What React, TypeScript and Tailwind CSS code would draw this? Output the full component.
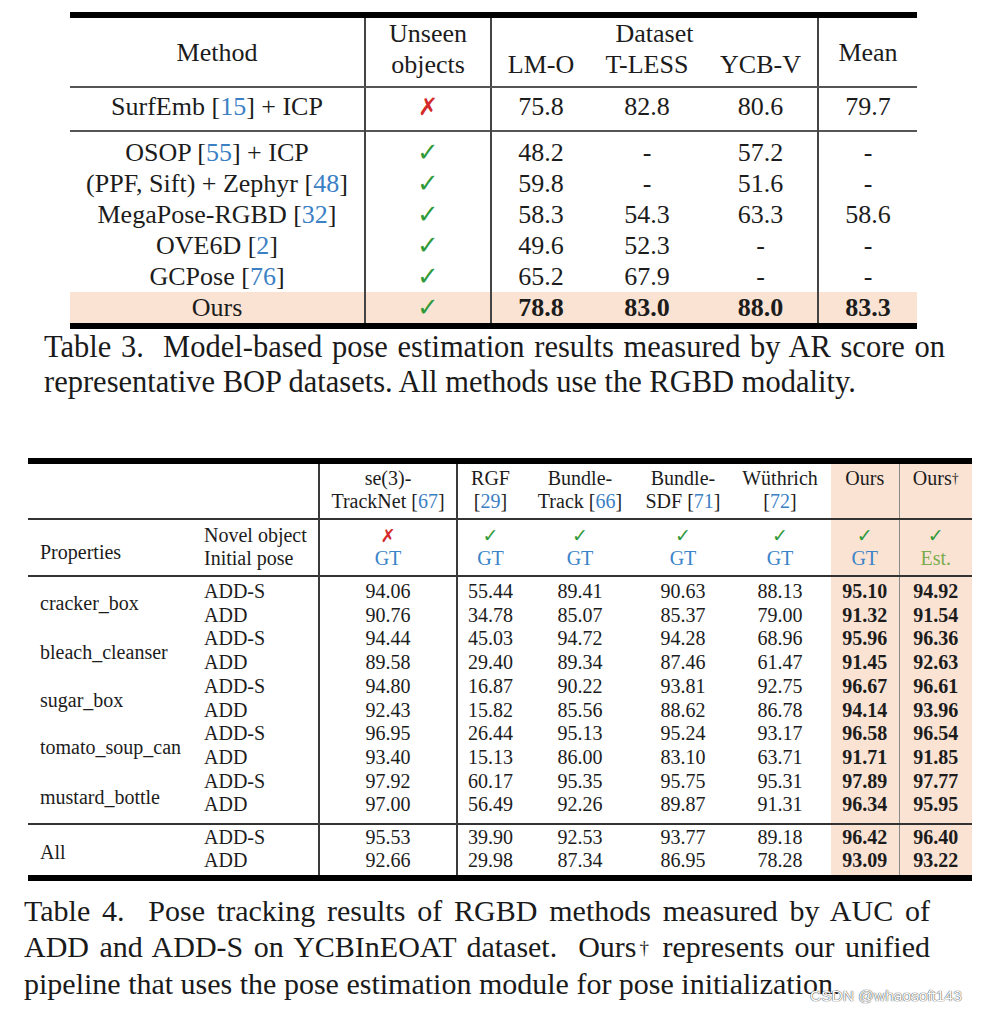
import React from "react";

const Cite = ({ n }: { n: string }) => (
  <>
    [<span className="text-[#3b80c4]">{n}</span>]
  </>
);

const Check = ({ big }: { big?: boolean }) => (
  <span
    className={
      big
        ? "font-['DejaVu_Sans',sans-serif] text-[26px] leading-none text-[#2f9a3a]"
        : "font-['DejaVu_Sans',sans-serif] text-[19px] leading-none text-[#2f9a3a]"
    }
  >
    ✓
  </span>
);

const Cross = ({ big }: { big?: boolean }) => (
  <span
    className={
      big
        ? "font-['DejaVu_Sans',sans-serif] text-[24px] leading-none text-[#d42a2a]"
        : "font-['DejaVu_Sans',sans-serif] text-[18px] leading-none text-[#d42a2a]"
    }
  >
    ✗
  </span>
);

const topRows = [
  { m: <>OSOP <Cite n="55" /> + ICP</>, v: ["48.2", "-", "57.2", "-"] },
  { m: <>(PPF, Sift) + Zephyr <Cite n="48" /></>, v: ["59.8", "-", "51.6", "-"] },
  { m: <>MegaPose-RGBD <Cite n="32" /></>, v: ["58.3", "54.3", "63.3", "58.6"] },
  { m: <>OVE6D <Cite n="2" /></>, v: ["49.6", "52.3", "-", "-"] },
  { m: <>GCPose <Cite n="76" /></>, v: ["65.2", "67.9", "-", "-"] },
];

const objects: [string, string[], string[]][] = [
  ["cracker_box", ["94.06", "55.44", "89.41", "90.63", "88.13", "95.10", "94.92"], ["90.76", "34.78", "85.07", "85.37", "79.00", "91.32", "91.54"]],
  ["bleach_cleanser", ["94.44", "45.03", "94.72", "94.28", "68.96", "95.96", "96.36"], ["89.58", "29.40", "89.34", "87.46", "61.47", "91.45", "92.63"]],
  ["sugar_box", ["94.80", "16.87", "90.22", "93.81", "92.75", "96.67", "96.61"], ["92.43", "15.82", "85.56", "88.62", "86.78", "94.14", "93.96"]],
  ["tomato_soup_can", ["96.95", "26.44", "95.13", "95.24", "93.17", "96.58", "96.54"], ["93.40", "15.13", "86.00", "83.10", "63.71", "91.71", "91.85"]],
  ["mustard_bottle", ["97.92", "60.17", "95.35", "95.75", "95.31", "97.89", "97.77"], ["97.00", "56.49", "92.26", "89.87", "91.31", "96.34", "95.95"]],
];

const allRow: [string[], string[]] = [
  ["95.53", "39.90", "92.53", "93.77", "89.18", "96.42", "96.40"],
  ["92.66", "29.98", "87.34", "86.95", "78.28", "93.09", "93.22"],
];

// per-column styling for the numeric cells of table 4
const vcls = (i: number) =>
  i === 0
    ? "border-r-2 border-r-[#3a3a3a]"
    : i === 5
    ? "bg-[#fbe3d4] font-bold"
    : i === 6
    ? "bg-[#fbe3d4] font-bold border-l border-l-[#8a8a8a]"
    : "";

const App: React.FC = () => {
  return (
    <div className="relative w-[984px] h-[1012px] overflow-hidden bg-white text-[#1c1c1c] font-['Liberation_Serif','Times_New_Roman',serif]">
      {/* Table 3 */}
      <div className="ml-[70px] mt-[12px] w-[847px]">
        <div className="h-[6px] bg-black" />
        <table className="w-[847px] table-fixed border-collapse text-[26px] text-center">
          <colgroup>
            <col className="w-[295px]" />
            <col className="w-[126px]" />
            <col className="w-[99px]" />
            <col className="w-[114px]" />
            <col className="w-[114px]" />
            <col className="w-[99px]" />
          </colgroup>
          <thead>
            <tr className="h-[31px]">
              <th rowSpan={2} className="font-normal align-middle border-r-2 border-r-[#444] border-b-2 border-b-[#555]">
                Method
              </th>
              <th rowSpan={2} className="font-normal align-top leading-[31px] border-r-2 border-r-[#444] border-b-2 border-b-[#555]">
                Unseen
                <br />
                objects
              </th>
              <th colSpan={3} className="font-normal leading-[31px] border-r-2 border-r-[#444]">
                Dataset
              </th>
              <th rowSpan={2} className="font-normal align-middle border-b-2 border-b-[#555]">
                Mean
              </th>
            </tr>
            <tr className="h-[38px]">
              <th className="font-normal align-top leading-[31px] border-b-2 border-b-[#555]">LM-O</th>
              <th className="font-normal align-top leading-[31px] border-b-2 border-b-[#555]">T-LESS</th>
              <th className="font-normal align-top leading-[31px] border-r-2 border-r-[#444] border-b-2 border-b-[#555]">
                YCB-V
              </th>
            </tr>
          </thead>
          <tbody>
            <tr className="leading-[31px] border-b-2 border-b-[#555]">
              <td className="pt-[3px] pb-[8px] border-r-2 border-r-[#444]">
                SurfEmb <Cite n="15" /> + ICP
              </td>
              <td className="pt-[3px] pb-[8px] border-r-2 border-r-[#444]">
                <Cross big />
              </td>
              <td className="pt-[3px] pb-[8px]">75.8</td>
              <td className="pt-[3px] pb-[8px]">82.8</td>
              <td className="pt-[3px] pb-[8px] border-r-2 border-r-[#444]">80.6</td>
              <td className="pt-[3px] pb-[8px]">79.7</td>
            </tr>
            {topRows.map((r, i) => (
              <tr key={i} className="leading-[31px]">
                <td className={i === 0 ? "pt-[5px] border-r-2 border-r-[#444]" : "border-r-2 border-r-[#444]"}>{r.m}</td>
                <td className={i === 0 ? "pt-[5px] border-r-2 border-r-[#444]" : "border-r-2 border-r-[#444]"}>
                  <Check big />
                </td>
                <td className={i === 0 ? "pt-[5px]" : ""}>{r.v[0]}</td>
                <td className={i === 0 ? "pt-[5px]" : ""}>{r.v[1]}</td>
                <td className={i === 0 ? "pt-[5px] border-r-2 border-r-[#444]" : "border-r-2 border-r-[#444]"}>{r.v[2]}</td>
                <td className={i === 0 ? "pt-[5px]" : ""}>{r.v[3]}</td>
              </tr>
            ))}
            <tr className="leading-[31px] bg-[#fbe3d4]">
              <td className="border-r-2 border-r-[#444]">Ours</td>
              <td className="border-r-2 border-r-[#444]">
                <Check big />
              </td>
              <td className="font-bold">78.8</td>
              <td className="font-bold">83.0</td>
              <td className="font-bold border-r-2 border-r-[#444]">88.0</td>
              <td className="font-bold">83.3</td>
            </tr>
          </tbody>
        </table>
        <div className="h-[6px] bg-black" />
      </div>

      {/* Caption 3 */}
      <div className="ml-[44px] mt-[1px] w-[901px] text-[30.5px] leading-[35px] text-[#1a1a1a]">
        <div className="text-justify [text-align-last:justify]">
          Table 3.&nbsp; Model-based pose estimation results measured by AR score on
        </div>
        <div>representative BOP datasets. All methods use the RGBD modality.</div>
      </div>

      {/* Table 4 */}
      <div className="ml-[28px] mt-[58px] w-[944px]">
        <div className="h-[6px] bg-black" />
        <table className="w-[944px] table-fixed border-collapse text-[20px] text-center">
          <colgroup>
            <col className="w-[164px]" />
            <col className="w-[127px]" />
            <col className="w-[138px]" />
            <col className="w-[66px]" />
            <col className="w-[114px]" />
            <col className="w-[92px]" />
            <col className="w-[102px]" />
            <col className="w-[68px]" />
            <col className="w-[73px]" />
          </colgroup>
          <thead>
            <tr className="leading-[23px] border-b-2 border-b-[#333] align-top">
              <th colSpan={2} className="font-normal border-r-2 border-r-[#3a3a3a]" />
              <th className="font-normal pt-[3px] pb-[5px] border-r-2 border-r-[#3a3a3a]">
                se(3)-
                <br />
                TrackNet <Cite n="67" />
              </th>
              <th className="font-normal pt-[3px] pb-[5px]">
                RGF
                <br />
                <Cite n="29" />
              </th>
              <th className="font-normal pt-[3px] pb-[5px]">
                Bundle-
                <br />
                Track <Cite n="66" />
              </th>
              <th className="font-normal pt-[3px] pb-[5px]">
                Bundle-
                <br />
                SDF <Cite n="71" />
              </th>
              <th className="font-normal pt-[3px] pb-[5px]">
                Wüthrich
                <br />
                <Cite n="72" />
              </th>
              <th className="font-normal pt-[3px] pb-[5px] bg-[#fbe3d4]">Ours</th>
              <th className="font-normal pt-[3px] pb-[5px] bg-[#fbe3d4] border-l border-l-[#8a8a8a]">
                Ours<sup className="text-[14px] leading-none relative -top-[2px]">†</sup>
              </th>
            </tr>
            <tr className="leading-[23px] border-b-2 border-b-[#333]">
              <td className="text-left pl-[12px] pt-[10px] align-middle">Properties</td>
              <td className="text-left pl-[12px] pt-[4px] pb-[5px] border-r-2 border-r-[#3a3a3a]">
                Novel object
                <br />
                Initial pose
              </td>
              <td className="pt-[4px] pb-[5px] border-r-2 border-r-[#3a3a3a]">
                <Cross />
                <br />
                <span className="text-[#3b84c8]">GT</span>
              </td>
              <td className="pt-[4px] pb-[5px]">
                <Check />
                <br />
                <span className="text-[#3b84c8]">GT</span>
              </td>
              <td className="pt-[4px] pb-[5px]">
                <Check />
                <br />
                <span className="text-[#3b84c8]">GT</span>
              </td>
              <td className="pt-[4px] pb-[5px]">
                <Check />
                <br />
                <span className="text-[#3b84c8]">GT</span>
              </td>
              <td className="pt-[4px] pb-[5px]">
                <Check />
                <br />
                <span className="text-[#3b84c8]">GT</span>
              </td>
              <td className="pt-[4px] pb-[5px] bg-[#fbe3d4]">
                <Check />
                <br />
                <span className="text-[#3b84c8]">GT</span>
              </td>
              <td className="pt-[4px] pb-[5px] bg-[#fbe3d4] border-l border-l-[#8a8a8a]">
                <Check />
                <br />
                <span className="text-[#7aab4e]">Est.</span>
              </td>
            </tr>
          </thead>
          <tbody className="border-b-2 border-b-[#333]">
            {objects.map(([name, a, b], oi) => {
              const first = oi === 0;
              const last = oi === objects.length - 1;
              return (
                <React.Fragment key={name}>
                  <tr className="leading-[23.7px]">
                    <td rowSpan={2} className="text-left pl-[12px] pt-[4px] align-middle">
                      {name}
                    </td>
                    <td className={first ? "text-left pl-[12px] pt-[3px] border-r-2 border-r-[#3a3a3a]" : "text-left pl-[12px] border-r-2 border-r-[#3a3a3a]"}>
                      ADD-S
                    </td>
                    {a.map((v, i) => (
                      <td key={i} className={first ? `pt-[3px] ${vcls(i)}` : vcls(i)}>
                        {v}
                      </td>
                    ))}
                  </tr>
                  <tr className="leading-[23.7px]">
                    <td className={last ? "text-left pl-[12px] pb-[6px] border-r-2 border-r-[#3a3a3a]" : "text-left pl-[12px] border-r-2 border-r-[#3a3a3a]"}>
                      ADD
                    </td>
                    {b.map((v, i) => (
                      <td key={i} className={last ? `pb-[6px] ${vcls(i)}` : vcls(i)}>
                        {v}
                      </td>
                    ))}
                  </tr>
                </React.Fragment>
              );
            })}
          </tbody>
          <tbody>
            <tr className="leading-[23.3px]">
              <td rowSpan={2} className="text-left pl-[12px] pt-[6px] align-middle">
                All
              </td>
              <td className="text-left pl-[12px] pt-[1px] border-r-2 border-r-[#3a3a3a]">ADD-S</td>
              {allRow[0].map((v, i) => (
                <td key={i} className={`pt-[1px] ${vcls(i)}`}>
                  {v}
                </td>
              ))}
            </tr>
            <tr className="leading-[23.3px]">
              <td className="text-left pl-[12px] pb-[2px] border-r-2 border-r-[#3a3a3a]">ADD</td>
              {allRow[1].map((v, i) => (
                <td key={i} className={`pb-[2px] ${vcls(i)}`}>
                  {v}
                </td>
              ))}
            </tr>
          </tbody>
        </table>
        <div className="h-[6px] bg-black" />
      </div>

      {/* Caption 4 */}
      <div className="ml-[24px] mt-[12px] w-[906px] text-[30px] leading-[36.5px] text-[#1a1a1a]">
        <div className="text-justify [text-align-last:justify]">
          Table 4.&nbsp; Pose tracking results of RGBD methods measured by AUC of
        </div>
        <div className="text-justify [text-align-last:justify]">
          ADD and ADD-S on YCBInEOAT dataset.&nbsp; Ours<sup className="text-[19px] leading-none relative -top-[3px]">†</sup> represents our unified
        </div>
        <div>pipeline that uses the pose estimation module for pose initialization.</div>
      </div>

      {/* watermark */}
      <div className="absolute left-[810px] top-[987px] text-[15.5px] leading-[18px] text-white font-['Liberation_Sans',sans-serif] [text-shadow:0_0_1px_#444,0_0_1px_#444]">
        CSDN @whaosoft143
      </div>
    </div>
  );
};

export default App;
